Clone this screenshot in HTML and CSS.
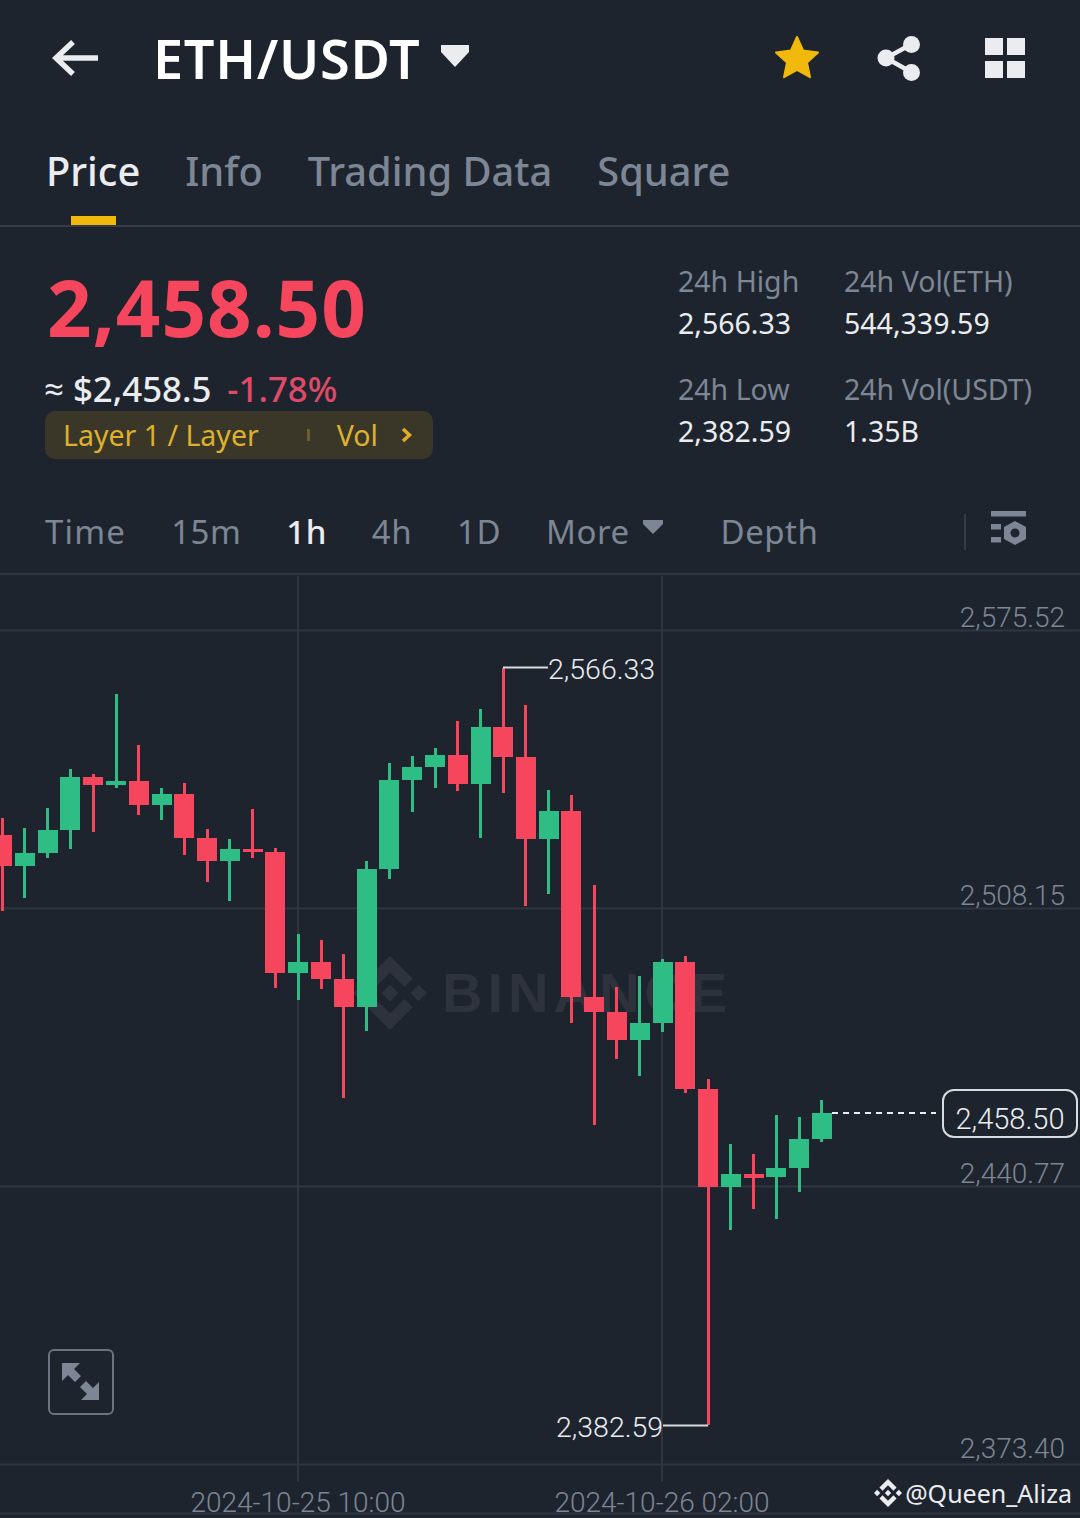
FILE: index.html
```html
<!DOCTYPE html>
<html lang="en">
<head>
<meta charset="utf-8">
<title>ETH/USDT</title>
<link rel="stylesheet" href="styles.css">
</head>
<body>
<div class="page">
  <header class="topbar">
    <svg class="icon-back" width="46" height="38" viewBox="0 0 46 38"><path d="M46 19H5M21 3 4 19l17 16" fill="none" stroke="#EAECEF" stroke-width="5.5"/></svg>
    <h1 class="pair">ETH/USDT</h1>
    <svg class="icon-caret" width="28" height="22" viewBox="0 0 28 22"><path d="M0 0h28v7L14 22 0 7z" fill="#EAECEF"/></svg>
    <div class="top-actions">
      <svg width="46" height="46" viewBox="0 0 46 46"><path d="M23 2l6.200 13.600 14.800 1.800-11 10.100 3 14.700L23 34.800 10 42.200l3-14.700L2 17.400l14.800-1.800z" fill="#F0B90B" stroke="#F0B90B" stroke-width="2" stroke-linejoin="round"/></svg>
      <svg width="44" height="46" viewBox="0 0 44 46"><circle cx="34.500" cy="9.500" r="8.500" fill="#EAECEF"/><circle cx="9" cy="23" r="8.500" fill="#EAECEF"/><circle cx="34.500" cy="37.500" r="8.500" fill="#EAECEF"/><path d="M34 9.500 9 23l25 14" fill="none" stroke="#EAECEF" stroke-width="4.500"/></svg>
      <svg class="icon-grid" width="40" height="40" viewBox="0 0 40 40"><path d="M0 0h18v17H0zM22 0h18v17H22zM0 23h18v17H0zM22 23h18v17H22z" fill="#EAECEF"/></svg>
    </div>
  </header>

  <nav class="tabs">
    <span class="tab tab-active">Price</span>
    <span class="tab">Info</span>
    <span class="tab">Trading Data</span>
    <span class="tab">Square</span>
  </nav>

  <section class="summary">
    <div class="quote">
      <div class="last-price">2,458.50</div>
      <div class="fiat"><span class="fiat-value">≈ $2,458.5</span><span class="change">-1.78%</span></div>
      <div class="tag">
        <span class="tag-name">Layer 1 / Layer</span>
        <span class="tag-sep"></span>
        <span class="tag-name">Vol</span>
        <svg width="12" height="16" viewBox="0 0 12 16"><path d="M2 2l6.500 6L2 14" fill="none" stroke="#E0AE24" stroke-width="3.500"/></svg>
      </div>
    </div>
    <div class="stats">
      <div class="stat stat-a"><span class="stat-label">24h High</span><span class="stat-value">2,566.33</span></div>
      <div class="stat stat-b"><span class="stat-label">24h Vol(ETH)</span><span class="stat-value">544,339.59</span></div>
      <div class="stat stat-a"><span class="stat-label">24h Low</span><span class="stat-value">2,382.59</span></div>
      <div class="stat stat-b"><span class="stat-label">24h Vol(USDT)</span><span class="stat-value">1.35B</span></div>
    </div>
  </section>

  <nav class="ranges">
    <span class="range range-time">Time</span>
    <span class="range">15m</span>
    <span class="range range-active">1h</span>
    <span class="range">4h</span>
    <span class="range">1D</span>
    <span class="range range-more">More<svg width="20" height="14" viewBox="0 0 20 14"><path d="M0 0h20v4L10 14 0 4z" fill="#7D8694"/></svg></span>
    <span class="range range-depth">Depth</span>
    <span class="range-sep"></span>
    <svg class="icon-settings" width="36" height="36" viewBox="0 0 36 36"><path d="M0 0h35v5.500H0zM0 13h10v5.500H0zM0 26h10v5.500H0z" fill="#7D8694"/><path d="M24 10l11 6v12l-11 6-11-6V16z" fill="#7D8694"/><circle cx="24" cy="22" r="4.500" fill="#1E242E"/></svg>
  </nav>

  <main class="chart">
    <div class="watermark">
      <svg width="74" height="74" viewBox="0 0 126.610 126.610"><path d="M38.730 53.200l24.590-24.580 24.600 24.600 14.300-14.310L63.320 0 24.420 38.900zM0 63.310l14.300-14.310 14.310 14.310-14.310 14.300zM38.730 73.410l24.590 24.590 24.600-24.600 14.310 14.290-38.900 38.910-38.910-38.880zM98 63.310l14.300-14.310 14.310 14.300-14.310 14.300zM77.830 63.300L63.320 48.780 52.590 59.510l-1.240 1.230-2.540 2.540 14.510 14.500 14.510-14.470z" fill="#2D323D"/></svg>
      <span class="watermark-text">BINANCE</span>
    </div>
    <svg class="plot" width="1080" height="943" viewBox="0 575 1080 943">
      <g class="grid">
        <path d="M0 630.500H1080M0 908.500H1080M0 1186.500H1080M0 1464.500H1080M0 1513.500H1080M298 576V1482M662 576V1482"/>
      </g>
      <g class="up">
        <rect x="23" y="828" width="3" height="70"/><rect x="15" y="853" width="20" height="13"/>
        <rect x="46" y="808" width="3" height="50"/><rect x="38" y="830" width="20" height="23"/>
        <rect x="69" y="769" width="3" height="80"/><rect x="60" y="777" width="20" height="53"/>
        <rect x="115" y="694" width="3" height="94"/><rect x="106" y="781" width="20" height="4"/>
        <rect x="160" y="788" width="3" height="32"/><rect x="152" y="794" width="20" height="11"/>
        <rect x="228" y="839" width="3" height="62"/><rect x="220" y="849" width="20" height="12"/>
        <rect x="297" y="934" width="3" height="66"/><rect x="288" y="962" width="20" height="11"/>
        <rect x="365" y="861" width="3" height="170"/><rect x="357" y="869" width="20" height="138"/>
        <rect x="388" y="763" width="3" height="116"/><rect x="379" y="780" width="20" height="89"/>
        <rect x="411" y="756" width="3" height="56"/><rect x="402" y="767" width="20" height="13"/>
        <rect x="434" y="748" width="3" height="40"/><rect x="425" y="755" width="20" height="12"/>
        <rect x="479" y="709" width="3" height="129"/><rect x="471" y="727" width="20" height="57"/>
        <rect x="547" y="790" width="3" height="104"/><rect x="539" y="811" width="20" height="28"/>
        <rect x="638" y="976" width="3" height="100"/><rect x="630" y="1023" width="20" height="17"/>
        <rect x="661" y="959" width="3" height="73"/><rect x="653" y="962" width="20" height="61"/>
        <rect x="729" y="1144" width="3" height="86"/><rect x="721" y="1174" width="20" height="13"/>
        <rect x="775" y="1115" width="3" height="104"/><rect x="766" y="1168" width="20" height="9"/>
        <rect x="798" y="1117" width="3" height="75"/><rect x="789" y="1139" width="20" height="29"/>
        <rect x="820" y="1100" width="3" height="42"/><rect x="812" y="1113" width="20" height="26"/>
      </g>
      <g class="down">
        <rect x="1" y="818" width="3" height="93"/><rect x="-8" y="835" width="20" height="31"/>
        <rect x="92" y="774" width="3" height="58"/><rect x="83" y="777" width="20" height="8"/>
        <rect x="137" y="745" width="3" height="70"/><rect x="129" y="781" width="20" height="24"/>
        <rect x="183" y="783" width="3" height="72"/><rect x="174" y="794" width="20" height="44"/>
        <rect x="206" y="829" width="3" height="53"/><rect x="197" y="838" width="20" height="23"/>
        <rect x="251" y="809" width="3" height="49"/><rect x="243" y="849" width="20" height="3"/>
        <rect x="274" y="848" width="3" height="140"/><rect x="265" y="852" width="20" height="121"/>
        <rect x="320" y="940" width="3" height="49"/><rect x="311" y="962" width="20" height="17"/>
        <rect x="342" y="954" width="3" height="144"/><rect x="334" y="979" width="20" height="28"/>
        <rect x="456" y="721" width="3" height="70"/><rect x="448" y="755" width="20" height="29"/>
        <rect x="502" y="668" width="3" height="125"/><rect x="493" y="727" width="20" height="30"/>
        <rect x="524" y="705" width="3" height="201"/><rect x="516" y="757" width="20" height="82"/>
        <rect x="570" y="795" width="3" height="228"/><rect x="561" y="811" width="20" height="186"/>
        <rect x="593" y="885" width="3" height="240"/><rect x="584" y="997" width="20" height="15"/>
        <rect x="615" y="987" width="3" height="72"/><rect x="607" y="1012" width="20" height="28"/>
        <rect x="684" y="956" width="3" height="137"/><rect x="675" y="962" width="20" height="127"/>
        <rect x="707" y="1079" width="3" height="346"/><rect x="698" y="1089" width="20" height="98"/>
        <rect x="752" y="1154" width="3" height="55"/><rect x="744" y="1174" width="20" height="4"/>
      </g>
      <path class="leader" d="M503 667.500H548M663 1425.500H708"/>
      <path class="last-line" d="M832 1113H936"/>
    </svg>

    <span class="axis axis-y axis-1">2,575.52</span>
    <span class="axis axis-y axis-2">2,508.15</span>
    <span class="axis axis-y axis-3">2,440.77</span>
    <span class="axis axis-y axis-4">2,373.40</span>
    <span class="axis axis-x axis-x1">2024-10-25 10:00</span>
    <span class="axis axis-x axis-x2">2024-10-26 02:00</span>
    <span class="extreme extreme-high">2,566.33</span>
    <span class="extreme extreme-low">2,382.59</span>
    <span class="last-box">2,458.50</span>

    <button class="expand" type="button" aria-label="Expand">
      <svg width="38" height="38" viewBox="0 0 38 38"><path d="M0 0h18L12 6l7 7-6 6-7-7-6 6zM37 37H19l6-6-7-7 6-6 7 7 6-6z" fill="#7D8694"/></svg>
    </button>

    <div class="credit">
      <svg width="28" height="28" viewBox="0 0 126.610 126.610"><path d="M38.730 53.200l24.590-24.580 24.600 24.600 14.300-14.310L63.320 0 24.420 38.900zM0 63.310l14.300-14.310 14.310 14.310-14.310 14.300zM38.730 73.410l24.590 24.590 24.600-24.600 14.310 14.290-38.900 38.910-38.910-38.880zM98 63.310l14.300-14.310 14.310 14.300-14.310 14.300zM77.830 63.300L63.320 48.780 52.590 59.510l-1.240 1.230-2.540 2.540 14.510 14.500 14.510-14.470z" fill="#EAECEF"/></svg>
      <span>@Queen_Aliza</span>
    </div>
  </main>
</div>
</body>
</html>
```

FILE: styles.css
```css
* { box-sizing: border-box; }
html, body { margin: 0; padding: 0; }
body {
  background: #1E242E;
  font-family: "Noto Sans", "Open Sans", sans-serif;
  color: #EAECEF;
  width: 1080px;
  height: 1518px;
  overflow: hidden;
}
.page { display: flex; flex-direction: column; height: 1518px; }

.topbar {
  height: 116px;
  display: flex;
  align-items: center;
  padding-left: 52px;
  flex: none;
}
.icon-back { flex: none; }
.pair {
  margin: 0 0 0 55px;
  font-size: 54px;
  font-weight: 600;
  letter-spacing: 0.7px;
  line-height: 60px;
  color: #fff;
}
.icon-caret { margin-left: 20px; margin-top: -4px; flex: none; }
.top-actions {
  margin-left: auto;
  display: flex;
  align-items: center;
  gap: 57px;
  padding-right: 55px;
}
.icon-grid { margin-left: 7px; }

.tabs {
  height: 111px;
  flex: none;
  display: flex;
  gap: 45px;
  padding: 30px 0 0 46px;
  border-bottom: 2px solid #363C47;
}
.tab {
  position: relative;
  height: 79px;
  font-size: 39.800px;
  font-weight: 500;
  line-height: 50px;
  color: #7D8694;
}
.tab-active { color: #EAECEF; }
.tab-active::after {
  content: "";
  position: absolute;
  left: 25px;
  width: 45px;
  bottom: 0;
  height: 9px;
  background: #F0B90B;
}

.summary {
  height: 263px;
  flex: none;
  display: flex;
  justify-content: space-between;
  padding-left: 45px;
}
.quote { display: flex; flex-direction: column; }
.last-price {
  margin: 30px 0 0 2px;
  font-size: 78px;
  font-weight: 700;
  letter-spacing: 1px;
  line-height: 100px;
  color: #F6465D;
}
.fiat {
  display: flex;
  gap: 16px;
  margin: 11px 0 0 -1px;
  font-size: 34.800px;
  font-weight: 500;
  line-height: 42px;
}
.change { color: #DF4A66; }
.tag {
  margin-top: 1px;
  width: 388px;
  height: 48px;
  display: flex;
  align-items: center;
  padding: 0 18px;
  border-radius: 10px;
  background: #3B3728;
}
.tag-name { flex: none; white-space: nowrap; font-size: 28.500px; color: #DDB12F; line-height: 40px; }
.tag-sep { flex: none; width: 3px; height: 12px; margin: 0 27px 0 48px; background: #6C5F2F; }
.tag svg { margin-left: 23px; flex: none; }

.stats {
  width: 402px;
  display: grid;
  grid-template-columns: 166px 1fr;
  grid-auto-rows: 108px;
  padding-top: 33px;
}
.stat { display: flex; flex-direction: column; font-size: 28.500px; line-height: 42px; }
.stat-label { color: #7D8694; }
.stat-value { color: #EAECEF; }

.ranges {
  height: 85px;
  flex: none;
  display: flex;
  align-items: center;
  gap: 45px;
  padding: 0 53px 0 45px;
  border-bottom: 2px solid #30363F;
}
.range { font-size: 33px; line-height: 44px; color: #7D8694; letter-spacing: 0.5px; }
.range-time { letter-spacing: 1.200px; }
.range-active { color: #EAECEF; font-weight: 500; }
.range-more { display: flex; align-items: center; gap: 13px; }
.range-more svg { margin-top: -10px; }
.range-depth { margin-left: 13px; }
.range-sep { width: 2px; height: 36px; margin-left: auto; background: #363C47; margin-right: -20px; }
.icon-settings { flex: none; margin-top: -6px; }

.chart { position: relative; flex: 1; min-height: 0; }
.plot { position: absolute; left: 0; top: 0; display: block; }
.grid path { stroke: #30363F; stroke-width: 2; fill: none; }
.up rect { fill: #2EBD85; }
.down rect { fill: #F6465D; }
.leader { stroke: #D8DBE0; stroke-width: 2; fill: none; }
.last-line { stroke: #EAECEF; stroke-width: 2; stroke-dasharray: 6 5; fill: none; }

.watermark {
  position: absolute;
  left: 353px;
  top: 381px;
  display: flex;
  align-items: center;
  gap: 15px;
}
.watermark-text {
  font-family: "Liberation Sans", sans-serif;
  font-size: 56px;
  font-weight: 700;
  letter-spacing: 5px;
  line-height: 56px;
  color: #2D323D;
}

.axis, .extreme, .last-box {
  position: absolute;
  font-family: Roboto, "Liberation Sans", sans-serif;
  font-weight: 300;
  font-size: 28px;
  line-height: 32px;
  white-space: nowrap;
}
.axis { color: #7D8694; }
.axis-y { right: 15px; }
.axis-1 { top: 27px; }
.axis-2 { top: 305px; }
.axis-3 { top: 583px; }
.axis-4 { top: 858px; }
.axis-x { top: 912px; transform: translateX(-50%); }
.axis-x1 { left: 298px; }
.axis-x2 { left: 662px; }
.extreme { color: #EAECEF; font-size: 28.500px; }
.extreme-high { left: 548px; top: 79px; }
.extreme-low { left: 556px; top: 837px; }
.last-box {
  left: 942px;
  top: 514px;
  width: 136px;
  height: 49px;
  display: flex;
  align-items: center;
  justify-content: center;
  padding-top: 10px;
  border: 2px solid #D8DBE0;
  border-radius: 12px;
  background: #1E242E;
  color: #EAECEF;
  font-size: 29px;
}

.expand {
  position: absolute;
  left: 48px;
  top: 774px;
  width: 66px;
  height: 66px;
  padding: 0;
  display: flex;
  align-items: center;
  justify-content: center;
  background: none;
  border: 2px solid #6B7280;
  border-radius: 6px;
}

.credit {
  position: absolute;
  right: 8px;
  top: 900px;
  display: flex;
  align-items: center;
  gap: 3px;
  font-size: 25px;
  line-height: 36px;
  color: #EAECEF;
}
```
